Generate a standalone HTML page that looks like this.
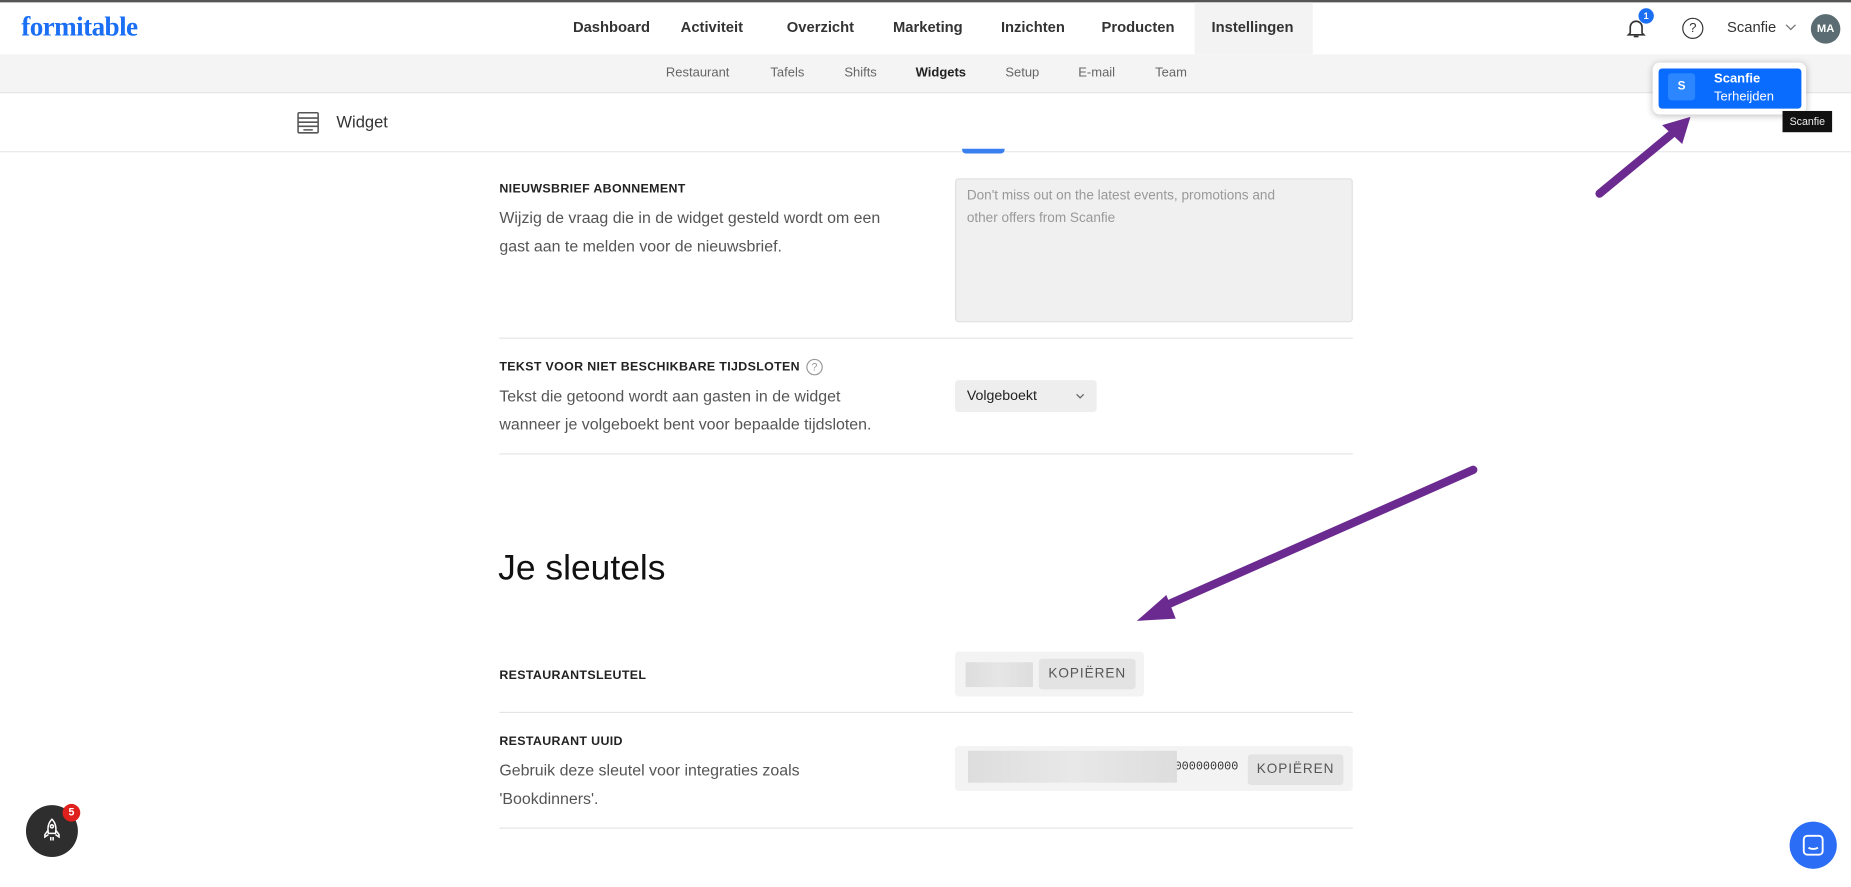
<!DOCTYPE html>
<html><head><meta charset="utf-8"><style>
*{margin:0;padding:0;box-sizing:border-box}
html,body{width:1851px;height:887px;overflow:hidden;background:#fff;font-family:"Liberation Sans",sans-serif}
#w{width:1568px;height:751px;position:relative;transform:scale(1.18048);transform-origin:0 0;color:#333}
.a{position:absolute;white-space:nowrap}
.nav{font-size:12.5px;font-weight:bold;color:#333;top:16px;transform:translateX(-50%)}
.sub{font-size:11px;color:#666;top:56px;transform:translateX(-50%)}
.lbl{font-size:10.5px;font-weight:bold;letter-spacing:.3px;color:#222}
.desc{font-size:13.5px;color:#555;line-height:23.5px}
.sep{position:absolute;left:423px;width:723px;height:1px;background:#e4e4e4}
.btn{position:absolute;background:#e3e3e3;border-radius:3px;font-size:11.5px;letter-spacing:.8px;color:#555;text-align:center}
</style></head><body><div id="w">
<div class="a" style="left:0;top:0;width:1568px;height:2px;background:#555"></div>
<div class="a" style="left:18px;top:10px;font-family:'Liberation Serif',serif;font-size:23px;font-weight:bold;color:#1a6ff5;letter-spacing:-.5px">formitable</div>
<div class="a" style="left:1012px;top:2px;width:100px;height:44px;background:#f3f3f3"></div>
<div class="a nav" style="left:518px">Dashboard</div>
<div class="a nav" style="left:603px">Activiteit</div>
<div class="a nav" style="left:695px">Overzicht</div>
<div class="a nav" style="left:786px">Marketing</div>
<div class="a nav" style="left:875px">Inzichten</div>
<div class="a nav" style="left:964px">Producten</div>
<div class="a nav" style="left:1061px">Instellingen</div>
<svg class="a" style="left:1376px;top:14px" width="20" height="20" viewBox="0 0 20 20" fill="none" stroke="#333" stroke-width="1.4"><path d="M5 14V9a5 5 0 0110 0v5l1.5 1.5h-13z M8 17h4"/></svg>
<div class="a" style="left:1388px;top:7px;width:13px;height:13px;border-radius:50%;background:#1a6ff5;color:#fff;font-size:8px;font-weight:bold;text-align:center;line-height:13px">1</div>
<div class="a" style="left:1425px;top:15px;width:18px;height:18px;border:1.4px solid #333;border-radius:50%;font-size:11px;text-align:center;line-height:16px">?</div>
<div class="a" style="left:1463px;top:16px;font-size:12.5px;color:#333">Scanfie</div>
<svg class="a" style="left:1512px;top:20px" width="10" height="6" viewBox="0 0 10 6" fill="none" stroke="#777" stroke-width="1.1"><path d="M1 1l4 4 4-4"/></svg>
<div class="a" style="left:1534px;top:12px;width:25px;height:25px;border-radius:50%;background:#5b6d72;color:#fff;font-size:9.5px;font-weight:bold;text-align:center;line-height:25px">MA</div>
<div class="a" style="left:0;top:46px;width:1568px;height:33px;background:#f4f4f4;border-bottom:1px solid #e6e6e6"></div>
<div class="a sub" style="left:591px">Restaurant</div>
<div class="a sub" style="left:667px">Tafels</div>
<div class="a sub" style="left:729px">Shifts</div>
<div class="a sub" style="left:797px;color:#222;font-weight:bold">Widgets</div>
<div class="a sub" style="left:866px">Setup</div>
<div class="a sub" style="left:929px">E-mail</div>
<div class="a sub" style="left:992px">Team</div>
<svg class="a" style="left:251px;top:94px" width="20" height="20" viewBox="0 0 20 20" fill="none" stroke="#555" stroke-width="1.3"><rect x="1.5" y="1.5" width="17" height="17" rx="1"/><path d="M1.5 6h17M1.5 9.5h17M1.5 13h17M6 16h8"/></svg>
<div class="a" style="left:285px;top:95px;font-size:14px;color:#333">Widget</div>
<div class="a" style="left:0;top:128px;width:1568px;height:1px;background:#e8e8e8"></div>
<div class="a" style="left:815px;top:126px;width:36px;height:4px;border-radius:0 0 3px 3px;background:#3a7ff0"></div>
<div class="a lbl" style="left:423px;top:154px">NIEUWSBRIEF ABONNEMENT</div>
<div class="a desc" style="left:423px;top:173px">Wijzig de vraag die in de widget gesteld wordt om een<br>gast aan te melden voor de nieuwsbrief.</div>
<div class="a" style="left:809px;top:151px;width:337px;height:122px;background:#f0f0f0;border:1px solid #e0e0e0;border-radius:3px;padding:5px 9px;font-size:11.5px;color:#999;line-height:19px;white-space:normal">Don't miss out on the latest events, promotions and<br>other offers from Scanfie</div>
<div class="sep" style="top:286px"></div>
<div class="a lbl" style="left:423px;top:305px">TEKST VOOR NIET BESCHIKBARE TIJDSLOTEN</div>
<div class="a" style="left:683px;top:304px;width:14px;height:14px;border:1px solid #999;border-radius:50%;font-size:9px;color:#999;text-align:center;line-height:12px">?</div>
<div class="a desc" style="left:423px;top:324px">Tekst die getoond wordt aan gasten in de widget<br>wanneer je volgeboekt bent voor bepaalde tijdsloten.</div>
<div class="a" style="left:809px;top:322px;width:120px;height:27px;background:#eee;border-radius:3px;font-size:12px;color:#222;padding:6px 10px">Volgeboekt<svg style="position:absolute;right:10px;top:11px" width="8" height="5" viewBox="0 0 8 5" fill="none" stroke="#666" stroke-width="1.1"><path d="M1 1l3 3 3-3"/></svg></div>
<div class="sep" style="top:384px"></div>
<div class="a" style="left:422px;top:465px;font-size:30px;color:#111">Je sleutels</div>
<div class="a lbl" style="left:423px;top:566px">RESTAURANTSLEUTEL</div>
<div class="a" style="left:809px;top:552px;width:160px;height:38px;background:#f3f3f3;border-radius:3px"></div>
<div class="a" style="left:818px;top:561px;width:57px;height:21px;background:linear-gradient(90deg,#ddd,#e6e6e6,#ddd)"></div>
<div class="btn" style="left:880px;top:558px;width:82px;height:26px;line-height:26px">KOPIËREN</div>
<div class="sep" style="top:603px"></div>
<div class="a lbl" style="left:423px;top:622px">RESTAURANT UUID</div>
<div class="a desc" style="left:423px;top:641px">Gebruik deze sleutel voor integraties zoals<br>'Bookdinners'.</div>
<div class="a" style="left:809px;top:632px;width:337px;height:38px;background:#f3f3f3;border-radius:3px"></div>
<div class="a" style="left:995px;top:645px;font-family:'Liberation Mono',monospace;font-size:10px;color:#333">000000000</div>
<div class="a" style="left:820px;top:636px;width:177px;height:27px;background:linear-gradient(90deg,#ddd,#e8e8e8,#ddd)"></div>
<div class="btn" style="left:1057px;top:639px;width:81px;height:26px;line-height:26px">KOPIËREN</div>
<div class="sep" style="top:701px"></div>
<div class="a" style="left:22px;top:682px;width:44px;height:44px;border-radius:50%;background:#2e2e2e"></div>
<svg class="a" style="left:34px;top:693px" width="20" height="22" viewBox="0 0 20 22" fill="none" stroke="#fff" stroke-width="1.3"><path d="M10 1c3 3 4 7 3 12H7C6 8 7 4 10 1z M7 10l-3 4v2l3-2 M13 10l3 4v2l-3-2 M9 16v3 M11 16v3"/><circle cx="10" cy="7" r="1.3"/></svg>
<div class="a" style="left:53px;top:681px;width:15px;height:15px;border-radius:50%;background:#e0201c;color:#fff;font-size:9px;font-weight:bold;text-align:center;line-height:15px">5</div>
<div class="a" style="left:1516px;top:696px;width:40px;height:40px;border-radius:50%;background:#2b6ef5"></div>
<svg class="a" style="left:1526px;top:706px" width="20" height="20" viewBox="0 0 20 20" fill="none" stroke="#fff" stroke-width="1.6"><rect x="2" y="2" width="16" height="16" rx="3"/><path d="M6 12c2 1.5 6 1.5 8 0"/></svg>
<div class="a" style="left:1400px;top:53px;width:130px;height:44px;background:#fff;border-radius:6px;box-shadow:0 1px 6px rgba(0,0,0,.25)"></div>
<div class="a" style="left:1405px;top:58px;width:121px;height:34px;background:#0a6cff;border-radius:3px"></div>
<div class="a" style="left:1413px;top:62px;width:23px;height:23px;background:#2b86ff;border-radius:3px;color:#fff;font-size:10px;font-weight:bold;text-align:center;line-height:23px">S</div>
<div class="a" style="left:1452px;top:61px;font-size:11px;font-weight:bold;color:#fff">Scanfie</div>
<div class="a" style="left:1452px;top:76px;font-size:11px;color:#fff">Terheijden</div>
<div class="a" style="left:1510px;top:94px;width:42px;height:18px;background:#111;color:#eee;font-size:9px;text-align:center;line-height:18px">Scanfie</div>
<svg class="a" style="left:0;top:0" width="1568" height="751">
<g stroke="#6b2a8f" stroke-width="7" stroke-linecap="round" fill="#6b2a8f">
<line x1="1355" y1="164" x2="1418" y2="112"/>
<line x1="1248" y1="398" x2="985" y2="514"/>
</g>
<polygon fill="#6b2a8f" points="1432,99 1408,106 1425,122"/>
<polygon fill="#6b2a8f" points="963,526 988,504 996,524"/>
</svg>
</div></body></html>
